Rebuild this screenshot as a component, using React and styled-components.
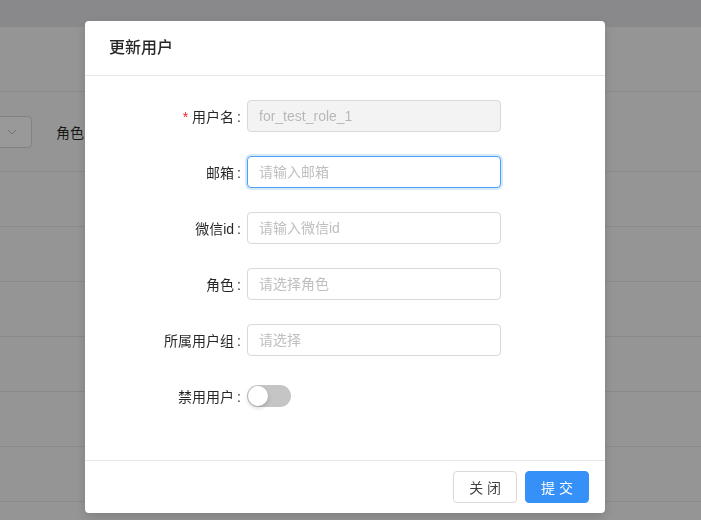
import React from 'react'
import styled, { createGlobalStyle } from 'styled-components'

const GlobalStyle = createGlobalStyle`
  *, *::before, *::after {
    box-sizing: border-box;
  }
  html, body {
    margin: 0;
    padding: 0;
    height: 100%;
  }
  body {
    font-family: "Liberation Sans", "Noto Sans CJK SC", sans-serif;
    font-size: 14px;
    color: rgba(0, 0, 0, 0.85);
    background: #f8f8f8;
    overflow: hidden;
  }
`

// page underneath the modal
const Page = styled.div`
  width: 701px;
  height: 520px;
  display: flex;
  flex-direction: column;
  background: #f8f8f8;
  overflow: hidden;
`

const TopBar = styled.div`
  height: 27px;
  flex: none;
  background: #e4e5e8;
`

const Spacer = styled.div`
  height: 65px;
  flex: none;
  border-bottom: 1px solid #e6e6e6;
`

const FilterBar = styled.div`
  height: 80px;
  flex: none;
  display: flex;
  align-items: center;
  gap: 24px;
  border-bottom: 1px solid #e6e6e6;
`

const SelectBox = styled.div`
  width: 132px;
  height: 32px;
  margin-left: -100px;
  border: 1px solid #d9d9d9;
  border-radius: 4px;
  background: #fff;
  display: flex;
  align-items: center;
  justify-content: flex-end;
  padding-right: 13px;
  color: rgba(0, 0, 0, 0.25);
`

const FilterLabel = styled.span`
  color: rgba(0, 0, 0, 0.85);
`

const TableRow = styled.div`
  height: 55px;
  flex: none;
  border-bottom: 1px solid #e6e6e6;
`

const Mask = styled.div`
  position: fixed;
  inset: 0;
  background: rgba(0, 0, 0, 0.4);
  padding: 21px 0 0 85px;
`

const Modal = styled.div`
  width: 520px;
  background: #fff;
  border-radius: 4px;
  box-shadow: 0 4px 12px rgba(0, 0, 0, 0.15);
  display: flex;
  flex-direction: column;
`

const Header = styled.div`
  padding: 16px 24px;
  border-bottom: 1px solid #e8e8e8;
`

const Title = styled.div`
  font-size: 16px;
  line-height: 22px;
  font-weight: 500;
  color: rgba(0, 0, 0, 0.85);
`

const Body = styled.div`
  padding: 24px 24px 48px;
  display: flex;
  flex-direction: column;
  gap: 24px;
`

const FormItem = styled.div`
  display: grid;
  grid-template-columns: 138px 254px;
  align-items: center;
  height: 32px;
`

const Label = styled.label`
  text-align: right;
  white-space: nowrap;
  color: rgba(0, 0, 0, 0.85);

  &::before {
    content: ${p => (p.required ? '"*"' : 'none')};
    display: inline-block;
    margin-right: 4px;
    color: #f5222d;
    font-size: 14px;
  }

  &::after {
    content: ':';
    margin: 0 6px 0 3px;
  }
`

const Input = styled.input`
  width: 100%;
  height: 32px;
  padding: 4px 11px;
  font: inherit;
  font-size: 14px;
  border: 1px solid ${p => (p.focused ? '#4aa2f8' : '#d9d9d9')};
  border-radius: 4px;
  outline: none;
  background: ${p => (p.disabled ? '#f3f3f3' : '#fff')};
  color: ${p => (p.disabled ? 'rgba(0, 0, 0, 0.25)' : 'rgba(0, 0, 0, 0.65)')};
  box-shadow: ${p => (p.focused ? '0 0 0 2px rgba(45, 140, 240, 0.2)' : 'none')};

  &::placeholder {
    color: #bfbfbf;
  }
`

const Switch = styled.button`
  position: relative;
  display: block;
  width: 44px;
  height: 22px;
  padding: 0;
  border: none;
  border-radius: 100px;
  background: ${p => (p.checked ? '#3590f7' : '#c5c5c5')};
  cursor: pointer;

  &::after {
    content: '';
    position: absolute;
    top: 1px;
    left: ${p => (p.checked ? '23px' : '1px')};
    width: 20px;
    height: 20px;
    border-radius: 50%;
    background: #fff;
    box-shadow: 0 2px 4px rgba(0, 35, 11, 0.2);
  }
`

const Footer = styled.div`
  padding: 10px 16px;
  border-top: 1px solid #e8e8e8;
  display: flex;
  justify-content: flex-end;
  gap: 8px;
`

const Button = styled.button`
  height: 32px;
  padding: 0 15px;
  font: inherit;
  font-size: 14px;
  white-space: nowrap;
  border-radius: 4px;
  cursor: pointer;
  border: 1px solid ${p => (p.primary ? '#3590f7' : '#d9d9d9')};
  background: ${p => (p.primary ? '#3590f7' : '#fff')};
  color: ${p => (p.primary ? '#fff' : 'rgba(0, 0, 0, 0.75)')};
`

const Chevron = () => (
  <svg width="12" height="12" viewBox="0 0 12 12" fill="none">
    <path d="M2 4l4 4 4-4" stroke="currentColor" strokeWidth="1" />
  </svg>
)

const fields = [
  { label: '邮箱', placeholder: '请输入邮箱', focused: true },
  { label: '微信id', placeholder: '请输入微信id' },
  { label: '角色', placeholder: '请选择角色' },
  { label: '所属用户组', placeholder: '请选择' },
]

export default function App() {
  return (
    <>
      <GlobalStyle />
      <Page>
        <TopBar />
        <Spacer />
        <FilterBar>
          <SelectBox>
            <Chevron />
          </SelectBox>
          <FilterLabel>角色</FilterLabel>
        </FilterBar>
        {[0, 1, 2, 3, 4, 5, 6].map(i => (
          <TableRow key={i} />
        ))}
      </Page>

      <Mask>
        <Modal>
          <Header>
            <Title>更新用户</Title>
          </Header>
          <Body>
            <FormItem>
              <Label required>用户名</Label>
              <Input disabled value="for_test_role_1" readOnly />
            </FormItem>
            {fields.map(f => (
              <FormItem key={f.label}>
                <Label>{f.label}</Label>
                <Input placeholder={f.placeholder} focused={f.focused} />
              </FormItem>
            ))}
            <FormItem>
              <Label>禁用用户</Label>
              <div>
                <Switch />
              </div>
            </FormItem>
          </Body>
          <Footer>
            <Button>关 闭</Button>
            <Button primary>提 交</Button>
          </Footer>
        </Modal>
      </Mask>
    </>
  )
}
